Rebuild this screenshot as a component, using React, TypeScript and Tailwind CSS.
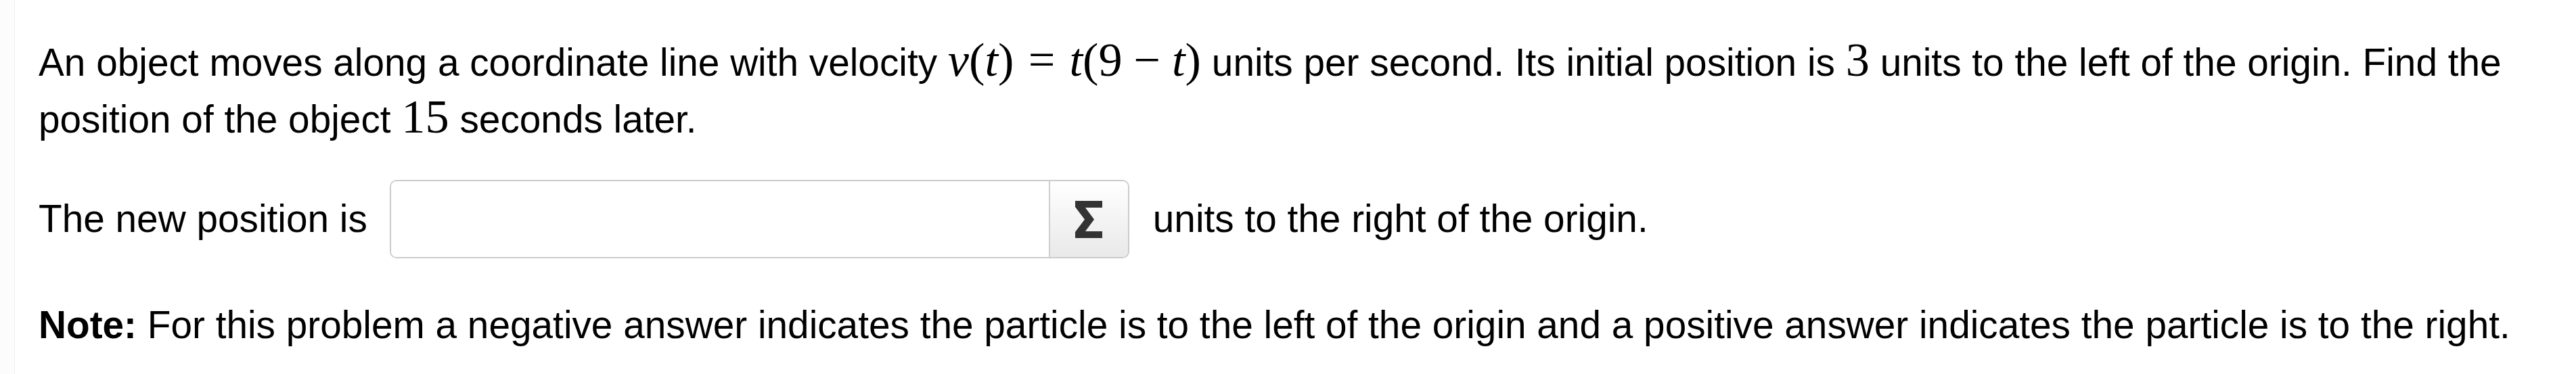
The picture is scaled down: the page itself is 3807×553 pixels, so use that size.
import React from "react";

const sans = "font-['Liberation_Sans',Arial,Helvetica,sans-serif]";

function M({ children }: { children: React.ReactNode }) {
  return (
    <span className="font-['Liberation_Serif','Times_New_Roman',serif] text-[1.24em] leading-[1]">
      {children}
    </span>
  );
}

function I({ children }: { children: React.ReactNode }) {
  return <span className="italic">{children}</span>;
}

function SigmaIcon() {
  return (
    <svg width="40" height="55" viewBox="0 0 40 55" aria-hidden="true">
      <path
        d="M0 0 H40 V10 H15 L28 27.5 L15 45 H40 V55 H0 V46 L14 27.5 L0 9 Z"
        fill="#333333"
      />
    </svg>
  );
}

export default function App() {
  return (
    <div className={`flex h-[553px] w-full bg-white text-black ${sans}`}>
      <div className="w-[22px] shrink-0 border-r border-[#efefef] bg-[#fcfcfc]" />
      <div className="flex-1 pl-[35px] pr-[40px] pt-[51px] text-[56.75px] leading-[84px]">
        <p>
          An object moves along a coordinate line with velocity{" "}
          <M>
            <I>v</I>(<I>t</I>)<span className="mx-[0.3em]">=</span>
            <I>t</I>(9<span className="mx-[0.24em]">−</span>
            <I>t</I>)
          </M>{" "}
          units per second. Its initial position is <M>3</M> units to the left of
          the origin. Find the position of the object <M>15</M> seconds later.
        </p>

        <div className="mt-[47px] flex items-center">
          <span>The new position is</span>
          <div className="ml-[33px] flex h-[116px] w-[1093px] overflow-hidden rounded-[10px] border-2 border-[#cbcbcb] shadow-[inset_0_2px_3px_rgba(0,0,0,0.08)]">
            <input
              type="text"
              className="h-full flex-1 bg-white px-4 outline-none"
              aria-label="answer"
            />
            <button
              type="button"
              className="flex h-full w-[117px] items-center justify-center border-l-2 border-[#cfcfcf] bg-gradient-to-b from-white to-[#e9e9e9]"
            >
              <SigmaIcon />
            </button>
          </div>
          <span className="ml-[35px]">units to the right of the origin.</span>
        </div>

        <p className="mt-[57px] whitespace-nowrap">
          <span className="font-bold">Note:</span> For this problem a negative
          answer indicates the particle is to the left of the origin and a
          positive answer indicates the particle is to the right.
        </p>
      </div>
    </div>
  );
}
